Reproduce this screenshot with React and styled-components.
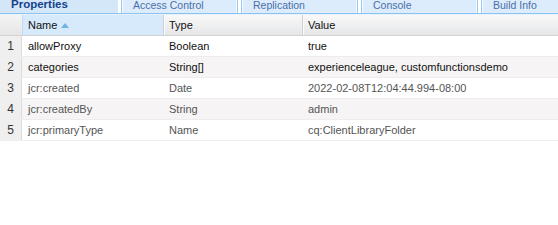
import React from 'react';
import styled, { createGlobalStyle } from 'styled-components';

const GlobalStyle = createGlobalStyle`
  body {
    margin: 0;
    background: #ffffff;
    font-family: "Liberation Sans", Arial, sans-serif;
  }
`;

const tabs = ['Properties', 'Access Control', 'Replication', 'Console', 'Build Info'];

const rows = [
    { name: 'allowProxy', type: 'Boolean', value: 'true', dark: true },
    { name: 'categories', type: 'String[]', value: 'experienceleague, customfunctionsdemo', dark: true },
    { name: 'jcr:created', type: 'Date', value: '2022-02-08T12:04:44.994-08:00' },
    { name: 'jcr:createdBy', type: 'String', value: 'admin' },
    { name: 'jcr:primaryType', type: 'Name', value: 'cq:ClientLibraryFolder' },
];

class App extends React.Component {
    render() {
        return (
            <Wrapper>
                <GlobalStyle />
                <TabStrip>
                    {tabs.map((t, i) => (
                        <Tab key={t} active={i === 0}>{t}</Tab>
                    ))}
                </TabStrip>
                <TabLine />
                <Grid>
                    <HeaderRow>
                        <NumHead />
                        <HeadCell sorted>
                            Name
                            <SortArrow viewBox="0 0 8 5">
                                <path d="M0 5 L4 0 L8 5 Z" fill="#6fb4e8" />
                            </SortArrow>
                        </HeadCell>
                        <HeadCell>Type</HeadCell>
                        <HeadCell>Value</HeadCell>
                    </HeaderRow>
                    {rows.map((r, i) => (
                        <Row key={r.name} alt={i % 2 === 1}>
                            <NumCell>{i + 1}</NumCell>
                            <Cell dark={r.dark}>{r.name}</Cell>
                            <Cell dark={r.dark}>{r.type}</Cell>
                            <Cell dark={r.dark}>{r.value}</Cell>
                        </Row>
                    ))}
                </Grid>
            </Wrapper>
        );
    }
}

export default App;

const Wrapper = styled.div`
    width: 558px;
    height: 225px;
    overflow: hidden;
    background: #fff;
`;

const TabStrip = styled.div`
    display: flex;
    gap: 3px;
    height: 13px;
    overflow: hidden;
    align-items: flex-end;
`;

const Tab = styled.div`
    flex: 0 0 auto;
    width: ${p => (p.active ? '118px' : '117px')};
    height: 24px;
    box-sizing: border-box;
    padding: ${p => (p.active ? '8px 0 0 10px' : '9px 0 0 11px')};
    font-size: ${p => (p.active ? '11.5px' : '10.5px')};
    font-weight: ${p => (p.active ? 'bold' : 'normal')};
    color: ${p => (p.active ? '#15428b' : '#4a6fa5')};
    background: ${p => (p.active ? '#d3e7f9' : '#dcecfc')};
    border: 1px solid ${p => (p.active ? '#d3e7f9' : '#99c8f0')};
    border-bottom: none;
    box-shadow: ${p => (p.active ? 'none' : 'inset 1px 0 0 #f4faff, inset -1px 0 0 #f4faff')};
    white-space: nowrap;
`;

const TabLine = styled.div`
    height: 1px;
    background: #8cc2ef;
    border-bottom: 1px solid #e6f2fc;
`;

const Grid = styled.div`
    display: flex;
    flex-direction: column;
    font-size: 11px;
`;

const HeaderRow = styled.div`
    display: grid;
    grid-template-columns: 22px 141px 139px 1fr;
    height: 20px;
    background: linear-gradient(#f9f9f9, #e5e6e8);
    border-bottom: 1px solid #d3d3d3;
`;

const NumHead = styled.div`
    background: linear-gradient(#f4f4f4, #e6e6e6);
`;

const HeadCell = styled.div`
    display: flex;
    align-items: center;
    gap: 4px;
    padding-left: 5px;
    color: #111;
    background: ${p => (p.sorted ? '#d7eafb' : 'transparent')};
    border-left: 1px solid ${p => (p.sorted ? '#bfdcf4' : '#d0d0d0')};
    box-shadow: ${p => (p.sorted ? 'none' : 'inset 1px 0 0 #fafafa')};
`;

const SortArrow = styled.svg`
    width: 8px;
    height: 5px;
    margin-top: 1px;
`;

const Row = styled.div`
    display: grid;
    grid-template-columns: 22px 141px 139px 1fr;
    height: 20px;
    background: ${p => (p.alt ? '#f6f4f4' : '#ffffff')};
    border-bottom: 1px solid #ededed;
`;

const NumCell = styled.div`
    display: flex;
    align-items: center;
    justify-content: center;
    background: #efefef;
    border-right: 1px solid #dcdcdc;
    color: #333;
    font-size: 12px;
`;

const Cell = styled.div`
    display: flex;
    align-items: center;
    padding-left: 6px;
    color: ${p => (p.dark ? '#111' : '#555')};
    white-space: nowrap;
`;
